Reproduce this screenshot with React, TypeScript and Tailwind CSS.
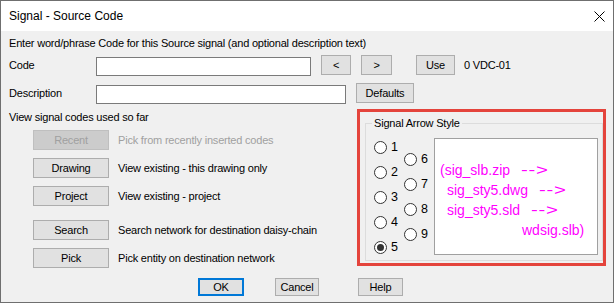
import React from 'react';

const Btn = ({ label, className = '', disabled = false }: { label: string; className?: string; disabled?: boolean }) => (
  <button
    className={`flex shrink-0 items-center justify-center border ${
      disabled ? 'border-[#bfbfbf] bg-[#cccccc] text-[#a0a0a0]' : 'border-[#adadad] bg-[#e1e1e1] text-black'
    } ${className}`}
  >
    {label}
  </button>
);

const Radio = ({ n, checked = false }: { n: number; checked?: boolean }) => (
  <div className="flex h-[25px] items-center gap-[4px]">
    <span className="flex h-[13px] w-[13px] items-center justify-center rounded-full border border-[#333333] bg-white">
      {checked && <span className="h-[7px] w-[7px] rounded-full bg-[#333333]" />}
    </span>
    <span className="text-[12.5px] tracking-normal">{n}</span>
  </div>
);

const PickRow = ({ label, text, disabled = false, className = '' }: { label: string; text: string; disabled?: boolean; className?: string }) => (
  <div className={`flex items-center gap-[9px] pl-[24px] ${className}`}>
    <Btn label={label} disabled={disabled} className="h-[20px] w-[76px]" />
    <span className={disabled ? 'text-[#a0a0a0]' : ''}>{text}</span>
  </div>
);

const Arrow = () => <span className="inline-block origin-left scale-x-[1.45] tracking-[0.5px]">--&gt;</span>;

const App = () => {
  return (
    <div className="relative h-[304px] w-[615px] bg-white font-['Liberation_Sans',Arial,sans-serif] text-[11px] tracking-[-0.2px] text-black">
      <div className="flex h-[303px] w-[614px] flex-col border border-[#6f6f6f] bg-[#f0f0f0]">
        {/* title bar */}
        <div className="flex h-[30px] shrink-0 items-center justify-between bg-white pl-2 pr-[8px] text-[12px] tracking-normal">
          <span>Signal - Source Code</span>
          <svg width="11" height="11" viewBox="0 0 11 11">
            <path d="M0.5 0.5 L10.5 10.5 M10.5 0.5 L0.5 10.5" stroke="#000" strokeWidth="1" />
          </svg>
        </div>

        <div className="flex flex-col pl-2">
          <div className="flex h-[24px] items-center">Enter word/phrase Code for this Source signal (and optional description text)</div>

          <div className="flex h-[28px] items-start">
            <span className="flex h-[20px] w-[87px] items-center">Code</span>
            <div className="mt-[2px] h-[19px] w-[215px] border border-[#7a7a7a] bg-white" />
            <Btn label="<" className="ml-[10px] h-[20px] w-[30px]" />
            <Btn label=">" className="ml-[10px] h-[20px] w-[31px]" />
            <Btn label="Use" className="ml-[24px] h-[20px] w-[39px]" />
            <span className="ml-[9px] flex h-[20px] items-center">0 VDC-01</span>
          </div>

          <div className="flex h-[21px] items-start">
            <span className="flex h-[20px] w-[87px] items-center">Description</span>
            <div className="mt-[2px] h-[19px] w-[250px] border border-[#7a7a7a] bg-white" />
            <Btn label="Defaults" className="ml-[10px] h-[20px] w-[58px]" />
          </div>

          <div className="flex h-[170px]">
            <div className="flex w-[356px] shrink-0 flex-col">
              <div className="flex h-[26px] items-center">View signal codes used so far</div>
              <PickRow label="Recent" text="Pick from recently inserted codes" disabled />
              <PickRow label="Drawing" text="View existing - this drawing only" className="mt-[8px]" />
              <PickRow label="Project" text="View existing - project" className="mt-[8px]" />
              <PickRow label="Search" text="Search network for destination daisy-chain" className="mt-[14px]" />
              <PickRow label="Pick" text="Pick entity on destination network" className="mt-[8px]" />
            </div>

            <div className="relative mt-[19px] h-[138px] w-[238px] shrink-0 border border-[#dcdcdc]">
              <span className="absolute left-[6px] top-[-8px] bg-[#f0f0f0] px-[2px] leading-[14px]">Signal Arrow Style</span>
              <div className="flex h-full">
                <div className="flex w-[38px] shrink-0 flex-col pl-[8px] pt-[11px]">
                  <Radio n={1} />
                  <Radio n={2} />
                  <Radio n={3} />
                  <Radio n={4} />
                  <Radio n={5} checked />
                </div>
                <div className="flex w-[30px] shrink-0 flex-col pt-[23px]">
                  <Radio n={6} />
                  <Radio n={7} />
                  <Radio n={8} />
                  <Radio n={9} />
                </div>
                <div className="mt-[14px] h-[117px] w-[164px] shrink-0 border border-[#a0a0a0] bg-white pt-[21px] text-[14px] leading-[20px] tracking-normal text-[#ff00ff]">
                  <div className="flex gap-[11px] pl-[5px]">
                    <span>(sig_slb.zip</span>
                    <Arrow />
                  </div>
                  <div className="flex gap-[11px] pl-[12px]">
                    <span>sig_sty5.dwg</span>
                    <Arrow />
                  </div>
                  <div className="flex gap-[11px] pl-[12px]">
                    <span>sig_sty5.sld</span>
                    <Arrow />
                  </div>
                  <div className="pl-[87px]">wdsig.slb)</div>
                </div>
              </div>
            </div>
          </div>

          <div className="flex pt-[4px]">
            <button className="ml-[189px] flex h-[18px] w-[46px] items-center justify-center border-2 border-[#0078d7] bg-[#e1e1e1]">OK</button>
            <Btn label="Cancel" className="ml-[31px] h-[18px] w-[44px]" />
            <Btn label="Help" className="ml-[39px] h-[18px] w-[45px]" />
          </div>
        </div>
      </div>

      {/* red highlight annotation */}
      <div className="pointer-events-none absolute left-[357px] top-[109px] h-[157px] w-[249px] border-[3px] border-[#e4443c]" />
    </div>
  );
};

export default App;
